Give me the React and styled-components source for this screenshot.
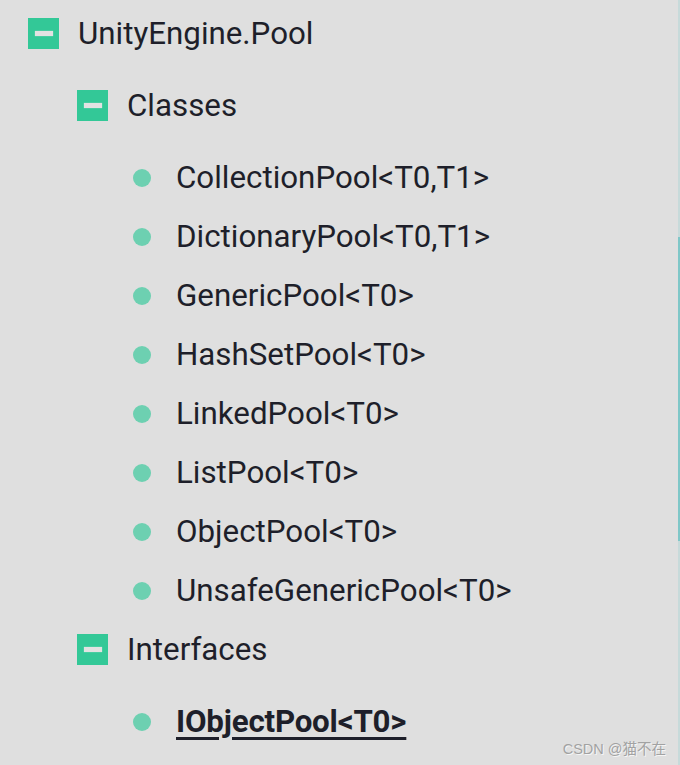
import React from "react";
import styled, { createGlobalStyle } from "styled-components";

const Global = createGlobalStyle`
  html, body { margin: 0; padding: 0; background: #dfdfdf; }
  body { font-family: Roboto, "Noto Sans", sans-serif; }
`;

const Page = styled.div`
  position: relative;
  width: 680px;
  height: 765px;
  overflow: hidden;
  background: #dfdfdf;
  box-sizing: border-box;
  padding: 4px 0 0 28px;
`;

const List = styled.ul`
  list-style: none;
  margin: ${(p) => (p.$nested ? "13px 0 0 0" : "0")};
  padding: 0 0 0 ${(p) => p.$indent || 0}px;
`;

const Row = styled.div`
  display: flex;
  align-items: center;
  height: 59px;
  gap: ${(p) => p.$gap}px;
`;

const Toggle = styled.span`
  flex: none;
  width: 31px;
  height: 31px;
  background: #33c897;
  display: flex;
  align-items: center;
  justify-content: center;
  &::after {
    content: "";
    width: 18px;
    height: 5px;
    background: #e2e2e2;
    box-shadow: 0 0 1px rgba(255, 255, 255, 0.6);
  }
`;

const Dot = styled.span`
  flex: none;
  width: 18px;
  height: 18px;
  border-radius: 50%;
  background: #6dd0b1;
  filter: blur(0.7px);
`;

const Label = styled.span`
  font-size: 31.3px;
  color: #1e1f2a;
  font-weight: ${(p) => (p.$active ? 700 : 400)};
  letter-spacing: ${(p) => (p.$active ? "-0.2px" : "0")};
  text-decoration: ${(p) => (p.$active ? "underline" : "none")};
  text-decoration-thickness: 3px;
  text-underline-offset: 5px;
  white-space: nowrap;
  line-height: 1;
`;

const Scroll = styled.div`
  position: absolute;
  top: 0;
  right: 0;
  width: 2px;
  height: 100%;
  background: #c7dada;
  &::after {
    content: "";
    position: absolute;
    left: 0;
    top: 237px;
    width: 2px;
    height: 304px;
    background: #7fc7c8;
  }
`;

const Watermark = styled.div`
  position: absolute;
  right: 14px;
  bottom: 7px;
  font-family: "Liberation Sans", "Noto Sans CJK SC", sans-serif;
  font-size: 14.5px;
  color: #a2a2a2;
  text-shadow: 1px 1px 0 rgba(255, 255, 255, 0.7);
`;

const classes = [
  "CollectionPool<T0,T1>",
  "DictionaryPool<T0,T1>",
  "GenericPool<T0>",
  "HashSetPool<T0>",
  "LinkedPool<T0>",
  "ListPool<T0>",
  "ObjectPool<T0>",
  "UnsafeGenericPool<T0>",
];

function Leaf({ text, active }) {
  return (
    <li>
      <Row $gap={25}>
        <Dot />
        <Label $active={active}>{text}</Label>
      </Row>
    </li>
  );
}

export default function App() {
  return (
    <>
      <Global />
      <Page>
        <List>
          <li>
            <Row $gap={19}>
              <Toggle />
              <Label>UnityEngine.Pool</Label>
            </Row>
            <List $nested $indent={49}>
              <li>
                <Row $gap={19}>
                  <Toggle />
                  <Label>Classes</Label>
                </Row>
                <List $nested $indent={56}>
                  {classes.map((c) => (
                    <Leaf key={c} text={c} />
                  ))}
                </List>
              </li>
              <li>
                <Row $gap={19}>
                  <Toggle />
                  <Label>Interfaces</Label>
                </Row>
                <List $nested $indent={56}>
                  <Leaf text="IObjectPool<T0>" active />
                </List>
              </li>
            </List>
          </li>
        </List>
        <Scroll />
        <Watermark>CSDN @猫不在</Watermark>
      </Page>
    </>
  );
}
